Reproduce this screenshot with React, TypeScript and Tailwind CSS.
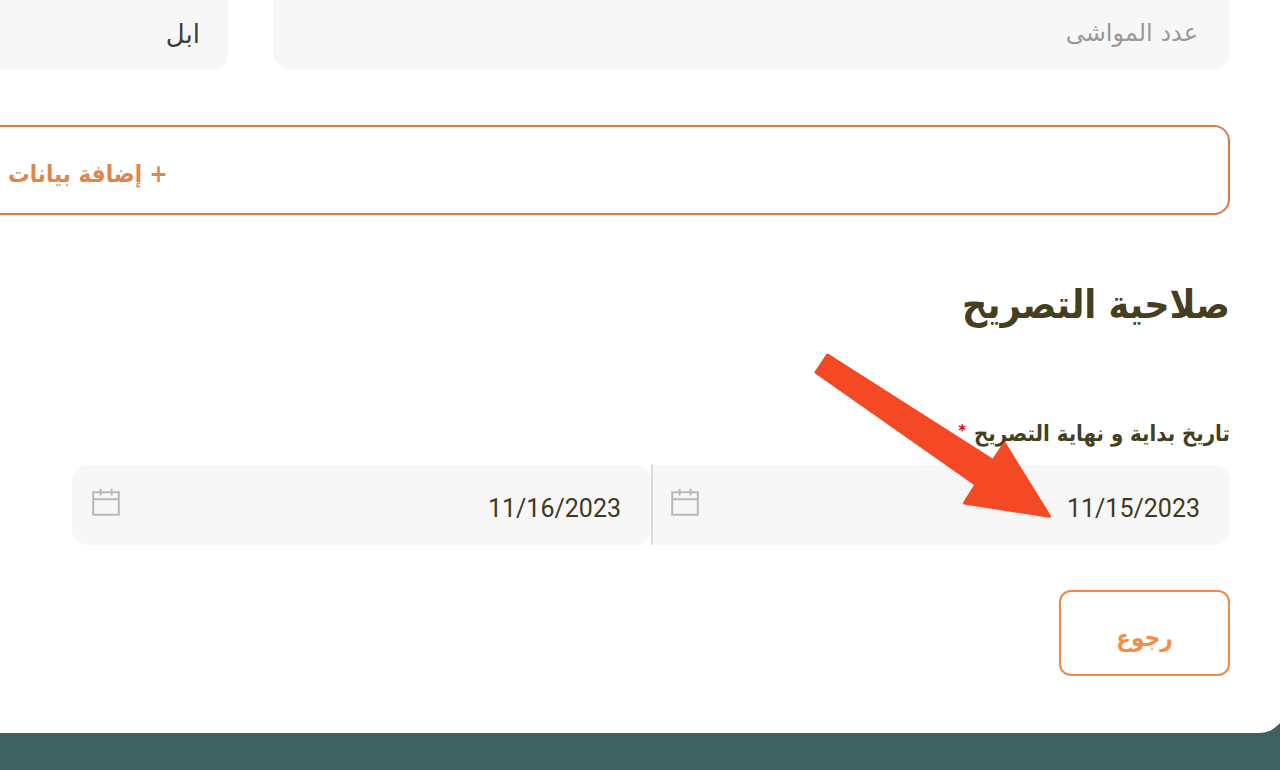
import { useState } from "react";

function CalendarIcon() {
  return (
    <svg width="28" height="28" viewBox="0 0 28 28" fill="none" stroke="#b9b9b9" strokeWidth="2" aria-hidden="true">
      <path d="M1.2 4.2h25.6v22.6H1.2zM1 11.2h26M8.6 .8v6.6M19.6 .8v6.6" />
    </svg>
  );
}

function PointerArrow() {
  return (
    <svg
      className="pointer-events-none absolute right-[176px] -top-[115px]"
      width="242"
      height="170"
      viewBox="812 350 242 170"
      aria-hidden="true"
    >
      <path
        d="M827.5 355 816 372.300 976 484.500 964.500 503 1049.500 516.300 1004.500 443.500 993 460.500Z"
        fill="#f54824"
        stroke="#f54824"
        strokeWidth="3"
        strokeLinejoin="round"
      />
    </svg>
  );
}

type DateFieldProps = {
  label: string;
  value: string;
  onChange: (value: string) => void;
  className: string;
};

function DateField({ label, value, onChange, className }: DateFieldProps) {
  return (
    <div className={`flex h-20 min-w-0 flex-1 items-center bg-[#f7f7f7] pr-[30px] ${className}`}>
      <input
        type="text"
        aria-label={label}
        value={value}
        onChange={(e) => onChange(e.target.value)}
        className="min-w-0 flex-1 bg-transparent pt-2 text-right font-[Roboto,sans-serif] text-[25px] leading-8 text-[#3f3a1c] outline-none"
      />
      <button type="button" aria-label={`اختيار ${label}`} className="pb-1.5">
        <CalendarIcon />
      </button>
    </div>
  );
}

export default function App() {
  const [count, setCount] = useState("");
  const [start, setStart] = useState("11/15/2023");
  const [end, setEnd] = useState("11/16/2023");

  return (
    <div dir="rtl" className="min-h-screen overflow-hidden bg-[#3f6060] font-['DejaVu_Sans',sans-serif]">
      <main className="-mr-1.5 rounded-br-[27px] bg-white pr-14 pb-[57px]">
        <div className="flex gap-[45px]">
          <input
            type="text"
            aria-label="عدد المواشى"
            placeholder="عدد المواشى"
            value={count}
            onChange={(e) => setCount(e.target.value)}
            className="h-[69px] min-w-0 flex-1 rounded-b-2xl bg-[#f7f7f7] px-8 pb-1 text-2xl text-[#3b3b3b] outline-none placeholder:text-[#999999] placeholder:opacity-100"
          />
          <select
            aria-label="نوع المواشى"
            className="h-[69px] w-[228px] appearance-none rounded-br-xl bg-[#f7f7f7] px-7 text-[26px] text-[#3b3b3b] outline-none"
          >
            <option>ابل</option>
          </select>
        </div>

        <button
          type="button"
          className="mt-14 flex h-[90px] w-full items-center justify-end rounded-r-2xl border-2 border-l-0 border-[#dc7a42] pt-2 pl-2 font-['DejaVu_Sans_Condensed','DejaVu_Sans',sans-serif] text-2xl font-bold text-[#df864d]"
        >
          + إضافة بيانات
        </button>

        <h2 className="mt-[60px] font-['DejaVu_Sans_Condensed','DejaVu_Sans',sans-serif] text-[39px] leading-[60px] font-bold text-[#453f20]">
          صلاحية التصريح
        </h2>

        <fieldset className="mt-[72px] ml-[72px] min-w-0">
          <legend className="flex h-[58px] items-start pt-2.5 font-['DejaVu_Sans_Condensed','DejaVu_Sans',sans-serif] text-[22px] font-bold text-[#453f20]">
            تاريخ بداية و نهاية التصريح
            <span className="mr-2 pt-0.5 text-base text-[#e00000]">*</span>
          </legend>
          <div className="relative flex">
            <DateField label="تاريخ البداية" value={start} onChange={setStart} className="rounded-r-2xl border-l-2 border-[#dadada] pl-[18px]" />
            <DateField label="تاريخ النهاية" value={end} onChange={setEnd} className="rounded-2xl pl-5" />
            <PointerArrow />
          </div>
        </fieldset>

        <button
          type="button"
          className="mt-[45px] flex h-[86px] w-[171px] items-center justify-center rounded-xl border-2 border-[#f18a43] pt-2.5 font-['DejaVu_Sans_Condensed','DejaVu_Sans',sans-serif] text-2xl font-bold text-[#f68b42]"
        >
          رجوع
        </button>
      </main>
    </div>
  );
}
